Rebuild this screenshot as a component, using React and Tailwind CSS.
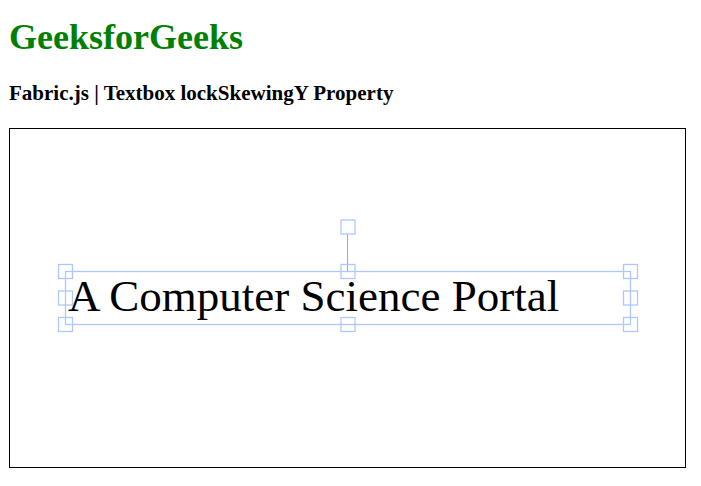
import React from "react"

// squares drawn on the selected textbox (fabric.js style controls)
const controls = [
    [55.5, 142.5], [338, 142.5], [620.5, 142.5],
    [55.5, 169], [620.5, 169],
    [55.5, 195.5], [338, 195.5], [620.5, 195.5],
    [338, 98],
]

const App = () => {
    return (
        <div className="min-h-[486px] bg-white pl-[9px] pt-[17px]" style={{ fontFamily: '"Liberation Serif", "Times New Roman", serif' }}>
            <h1 className="text-[36px] leading-[40px] font-bold text-[#008000]">GeeksforGeeks</h1>
            <h3 className="mt-[24px] text-[21px] leading-[24px] font-bold text-black">Fabric.js | Textbox lockSkewingY Property</h3>

            {/* canvas */}
            <div className="relative mt-[23px] w-[677px] h-[340px] border border-black bg-white">
                <div className="absolute left-[58px] top-[142px] text-[45px] leading-[51px] text-black whitespace-nowrap">
                    A Computer Science Portal
                </div>
                <svg className="absolute left-0 top-0" width="675" height="338" viewBox="0 0 675 338">
                    <rect x="55.5" y="142.5" width="565" height="53" fill="none" stroke="#adc8ff" strokeWidth="1.3" />
                    <line x1="337.5" y1="105" x2="337.5" y2="142.5" stroke="#8eaefc" strokeWidth="1.1" />
                    {controls.map(([cx, cy], i) => (
                        <rect key={i} x={cx - 7} y={cy - 7} width="14" height="14" fill="none" stroke="#adc8ff" strokeWidth="1.3" />
                    ))}
                </svg>
            </div>
        </div>
    )
}

export default App
